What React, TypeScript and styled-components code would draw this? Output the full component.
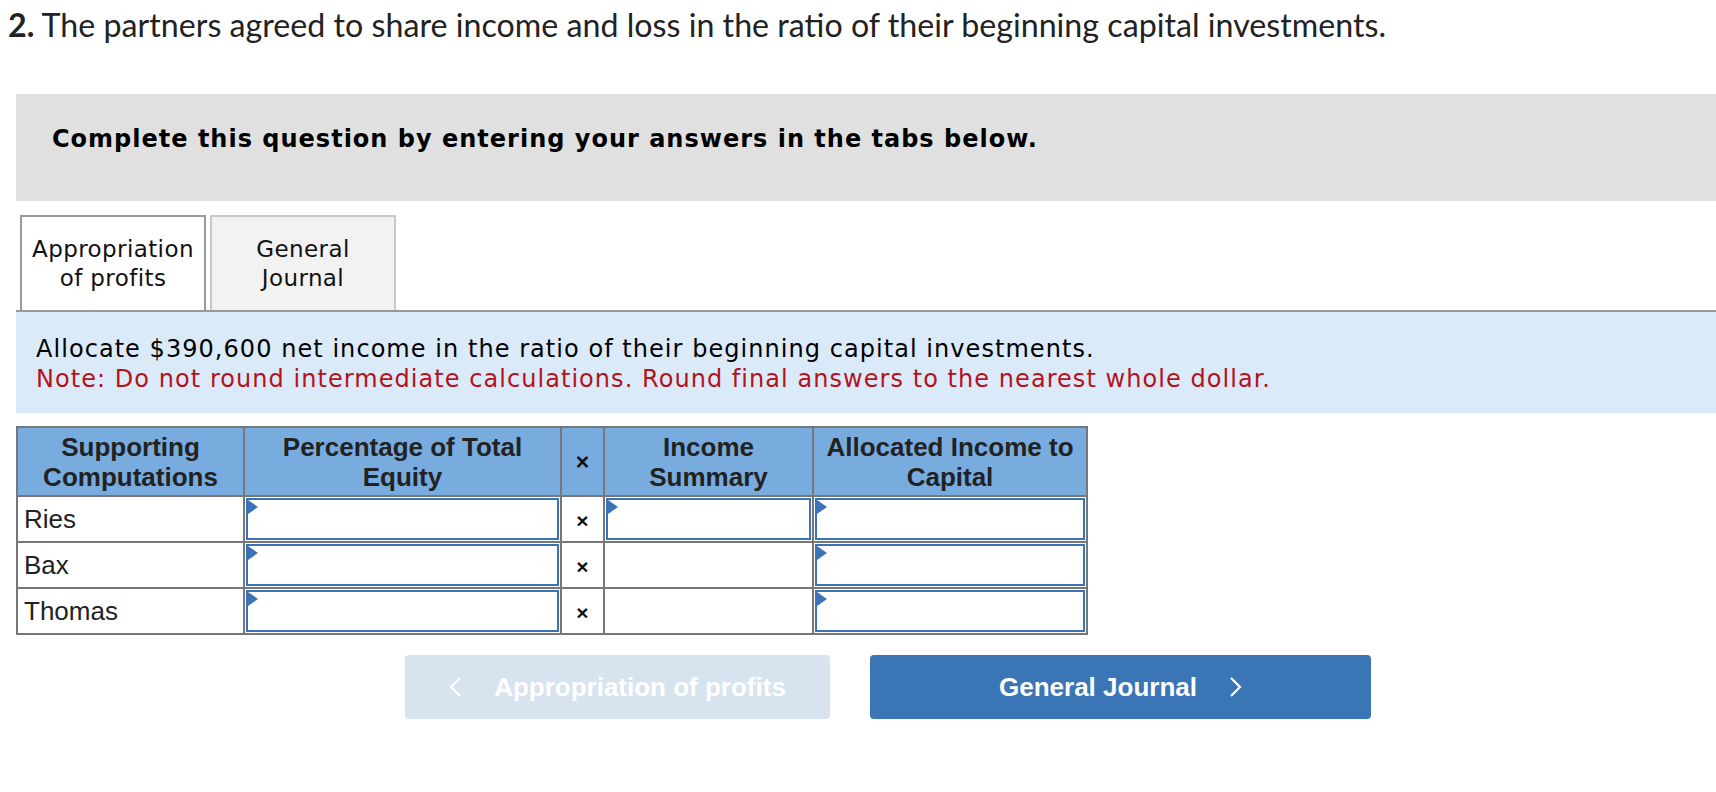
import styled, { createGlobalStyle } from "styled-components";

const GlobalStyle = createGlobalStyle`
  html, body {
    margin: 0;
    padding: 0;
    background: #fff;
  }
`;

const Page = styled.div`
  width: 1716px;
  padding-bottom: 40px;
`;

const Title = styled.h2`
  margin: 0;
  padding: 6px 0 0 8px;
  font-family: Lato, "Open Sans", sans-serif;
  font-size: 32.2px;
  line-height: 38px;
  font-weight: 400;
  color: #222;

  strong {
    font-weight: 700;
  }
`;

const Banner = styled.div`
  box-sizing: border-box;
  margin: 50px 0 0 16px;
  height: 107px;
  padding: 32px 36px 0;
  background: #e0e0e0;
  font-family: "DejaVu Sans", Verdana, sans-serif;
  font-size: 24px;
  letter-spacing: 1px;
  line-height: 27px;
  font-weight: 700;
  color: #000;
`;

const TabBar = styled.div`
  display: flex;
  gap: 4px;
  margin: 14px 0 0 16px;
  padding-left: 4px;
  border-bottom: 2px solid #999;
`;

const Tab = styled.div<{ $active?: boolean }>`
  box-sizing: border-box;
  width: 186px;
  height: 95px;
  display: flex;
  align-items: center;
  justify-content: center;
  text-align: center;
  border: 2px solid ${(p) => (p.$active ? "#999" : "#c8c8c8")};
  border-bottom: none;
  background: ${(p) => (p.$active ? "#fff" : "#f2f2f2")};
  font-family: "DejaVu Sans", Verdana, sans-serif;
  font-size: 23px;
  letter-spacing: 0.4px;
  line-height: 29px;
  color: #111;
`;

const InfoPanel = styled.div`
  box-sizing: border-box;
  margin-left: 16px;
  height: 101px;
  padding: 22px 20px 0;
  background: #daeaf8;
  font-family: "DejaVu Sans", Verdana, sans-serif;
  font-size: 24px;
  letter-spacing: 1.05px;
  line-height: 30px;
  color: #000;

  p {
    margin: 0;
  }
`;

const Note = styled.p`
  color: #b5121b;
`;

const Sheet = styled.table`
  margin: 13px 0 0 16px;
  border-collapse: collapse;
  table-layout: fixed;
  width: 1070px;
  font-family: "Liberation Sans", Arial, sans-serif;
  color: #222;
`;

const HeadCell = styled.th<{ $w: number }>`
  width: ${(p) => p.$w - 2}px;
  height: 67px;
  padding: 0;
  background: #78acdf;
  border: 2px solid #777;
  font-size: 26px;
  line-height: 30px;
  font-weight: 700;
  text-align: center;
  vertical-align: middle;
`;

const Cell = styled.td<{ $center?: boolean }>`
  height: 44px;
  padding: 0 ${(p) => (p.$center ? "0" : "6px")};
  border: 2px solid #777;
  background: #fff;
  font-size: 26px;
  text-align: ${(p) => (p.$center ? "center" : "left")};
  vertical-align: middle;
`;

const EntryCell = styled.td`
  height: 44px;
  padding: 0;
  border: 2px solid #777;
  background: #fff;
`;

const Entry = styled.div`
  position: relative;
  box-sizing: border-box;
  height: 42px;
  margin: 1px;
  border: 2px solid #3b73b9;
  background: #fff;

  &::before {
    content: "";
    position: absolute;
    left: 0;
    top: 0;
    border-top: 7px solid transparent;
    border-bottom: 7px solid transparent;
    border-left: 10px solid #3b73b9;
  }
`;

const Times = styled.span<{ $head?: boolean }>`
  font-size: ${(p) => (p.$head ? "23px" : "21px")};
  font-weight: 700;
  color: #111;
`;

const NavRow = styled.div`
  display: flex;
  gap: 40px;
  margin: 20px 0 0 405px;
`;

const NavButton = styled.button<{ $dim?: boolean; $w: number }>`
  box-sizing: border-box;
  width: ${(p) => p.$w}px;
  height: 64px;
  display: flex;
  align-items: center;
  justify-content: center;
  gap: 32px;
  border: none;
  border-radius: 4px;
  background: ${(p) => (p.$dim ? "#d8e3f0" : "#3a75b6")};
  color: #fff;
  font-family: "Liberation Sans", Arial, sans-serif;
  font-size: 26px;
  font-weight: 700;
  cursor: ${(p) => (p.$dim ? "default" : "pointer")};
`;

const Chevron = ({ dir }: { dir: "left" | "right" }) => (
  <svg width="13" height="20" viewBox="0 0 13 20" fill="none">
    <polyline
      points={dir === "left" ? "11,1 2,10 11,19" : "2,1 11,10 2,19"}
      stroke="#fff"
      strokeWidth="2.2"
    />
  </svg>
);

const partners = [
  { name: "Ries", income: true },
  { name: "Bax", income: false },
  { name: "Thomas", income: false },
];

export default function App() {
  return (
    <>
      <GlobalStyle />
      <Page>
        <Title>
          <strong>2.</strong> The partners agreed to share income and loss in the ratio of their
          beginning capital investments.
        </Title>

        <Banner>Complete this question by entering your answers in the tabs below.</Banner>

        <TabBar>
          <Tab $active>
            Appropriation
            <br />
            of profits
          </Tab>
          <Tab>
            General
            <br />
            Journal
          </Tab>
        </TabBar>

        <InfoPanel>
          <p>Allocate $390,600 net income in the ratio of their beginning capital investments.</p>
          <Note>Note: Do not round intermediate calculations. Round final answers to the nearest whole dollar.</Note>
        </InfoPanel>

        <Sheet>
          <thead>
            <tr>
              <HeadCell $w={227}>
                Supporting
                <br />
                Computations
              </HeadCell>
              <HeadCell $w={317}>
                Percentage of Total
                <br />
                Equity
              </HeadCell>
              <HeadCell $w={43}>
                <Times $head>×</Times>
              </HeadCell>
              <HeadCell $w={209}>
                Income
                <br />
                Summary
              </HeadCell>
              <HeadCell $w={274}>
                Allocated Income to
                <br />
                Capital
              </HeadCell>
            </tr>
          </thead>
          <tbody>
            {partners.map((p) => (
              <tr key={p.name}>
                <Cell>{p.name}</Cell>
                <EntryCell>
                  <Entry />
                </EntryCell>
                <Cell $center>
                  <Times>×</Times>
                </Cell>
                {p.income ? (
                  <EntryCell>
                    <Entry />
                  </EntryCell>
                ) : (
                  <Cell />
                )}
                <EntryCell>
                  <Entry />
                </EntryCell>
              </tr>
            ))}
          </tbody>
        </Sheet>

        <NavRow>
          <NavButton $dim $w={425}>
            <Chevron dir="left" />
            Appropriation of profits
          </NavButton>
          <NavButton $w={501}>
            General Journal
            <Chevron dir="right" />
          </NavButton>
        </NavRow>
      </Page>
    </>
  );
}
